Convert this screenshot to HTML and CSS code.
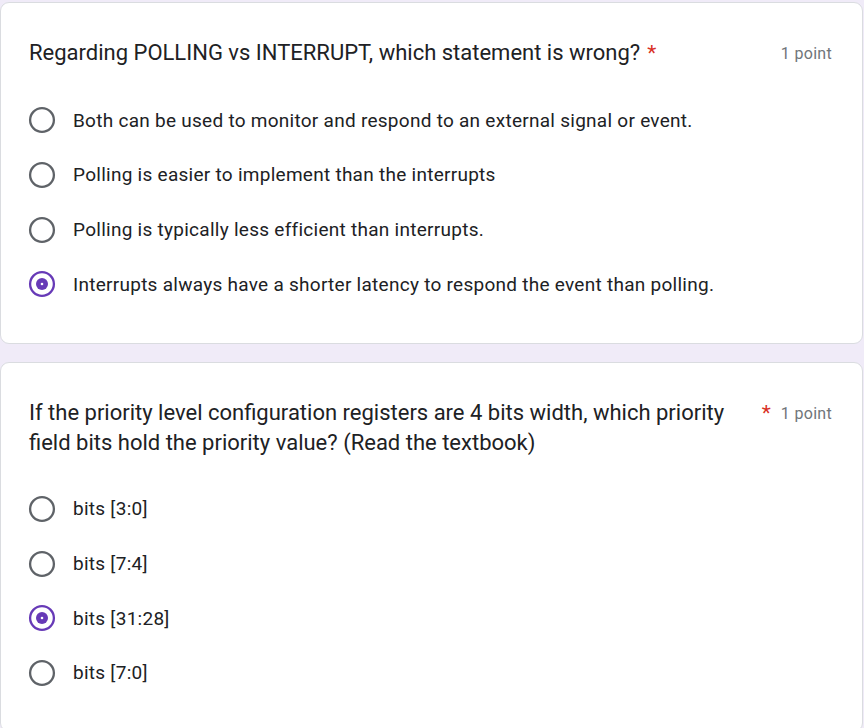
FILE: index.html
```html
<!DOCTYPE html>
<html>
<head>
<meta charset="utf-8">
<link rel="stylesheet" href="styles.css">
</head>
<body>
<div class="form">
  <div class="card">
    <div class="q-head">
      <div class="q-title">Regarding POLLING vs INTERRUPT, which statement is wrong?</div>
      <span class="req">*</span>
      <span class="points">1 point</span>
    </div>
    <div class="options">
      <div class="opt"><svg class="radio" viewBox="0 0 28 28"><circle cx="14" cy="14" r="11.9" class="ring"/></svg><span>Both can be used to monitor and respond to an external signal or event.</span></div>
      <div class="opt"><svg class="radio" viewBox="0 0 28 28"><circle cx="14" cy="14" r="11.9" class="ring"/></svg><span>Polling is easier to implement than the interrupts</span></div>
      <div class="opt"><svg class="radio" viewBox="0 0 28 28"><circle cx="14" cy="14" r="11.9" class="ring"/></svg><span>Polling is typically less efficient than interrupts.</span></div>
      <div class="opt"><svg class="radio on" viewBox="0 0 28 28"><circle cx="14" cy="14" r="11.9" class="ring"/><circle cx="14" cy="14" r="6" class="dot"/><circle cx="14" cy="14" r="1.3" class="pin"/></svg><span>Interrupts always have a shorter latency to respond the event than polling.</span></div>
    </div>
  </div>
  <div class="card">
    <div class="q-head">
      <div class="q-title">If the priority level configuration registers are 4 bits width, which priority field bits hold the priority value? (Read the textbook)</div>
      <span class="req">*</span>
      <span class="points">1 point</span>
    </div>
    <div class="options">
      <div class="opt"><svg class="radio" viewBox="0 0 28 28"><circle cx="14" cy="14" r="11.9" class="ring"/></svg><span>bits [3:0]</span></div>
      <div class="opt"><svg class="radio" viewBox="0 0 28 28"><circle cx="14" cy="14" r="11.9" class="ring"/></svg><span>bits [7:4]</span></div>
      <div class="opt"><svg class="radio on" viewBox="0 0 28 28"><circle cx="14" cy="14" r="11.9" class="ring"/><circle cx="14" cy="14" r="6" class="dot"/><circle cx="14" cy="14" r="1.3" class="pin"/></svg><span>bits [31:28]</span></div>
      <div class="opt"><svg class="radio" viewBox="0 0 28 28"><circle cx="14" cy="14" r="11.9" class="ring"/></svg><span>bits [7:0]</span></div>
    </div>
  </div>
</div>
</body>
</html>
```

FILE: styles.css
```css
html, body {
  margin: 0;
  padding: 0;
  background: #f0ebf8;
  height: 100%;
  overflow: hidden;
}
.form {
  padding-top: 2px;
  display: flex;
  flex-direction: column;
  gap: 18px;
  margin-right: 1px;
}
.card {
  background: #fff;
  border: 1px solid #dadce0;
  border-radius: 9px;
  padding: 35px 30px 31px 28px;
}
.q-head {
  display: flex;
  align-items: flex-start;
}
.q-title {
  flex: 0 1 auto;
  font-family: "Roboto", "Liberation Sans", sans-serif;
  font-size: 22px;
  line-height: 30px;
  color: #202124;
}
.req {
  flex: none;
  font-family: "Roboto", sans-serif;
  font-size: 21px;
  line-height: 30px;
  color: #d93025;
  margin: 0 10px 0 7px;
}
.points {
  flex: none;
  margin-left: auto;
  padding-top: 1px;
  font-family: "Roboto", sans-serif;
  font-size: 16px;
  letter-spacing: 0.3px;
  line-height: 30px;
  color: #70757a;
}
.options {
  margin-top: 24px;
  display: flex;
  flex-direction: column;
}
.opt {
  height: 54.67px;
  display: flex;
  align-items: center;
  font-family: "Roboto", sans-serif;
  font-size: 19px;
  letter-spacing: 0.27px;
  color: #202124;
}
.radio {
  width: 28px;
  height: 28px;
  margin-left: -1px;
  margin-right: 17px;
  flex: none;
}
.ring {
  fill: none;
  stroke: #5f6368;
  stroke-width: 2.3;
}
.on .ring {
  stroke: #673ab7;
}
.dot {
  fill: #673ab7;
}
.pin {
  fill: #fff;
}
```
